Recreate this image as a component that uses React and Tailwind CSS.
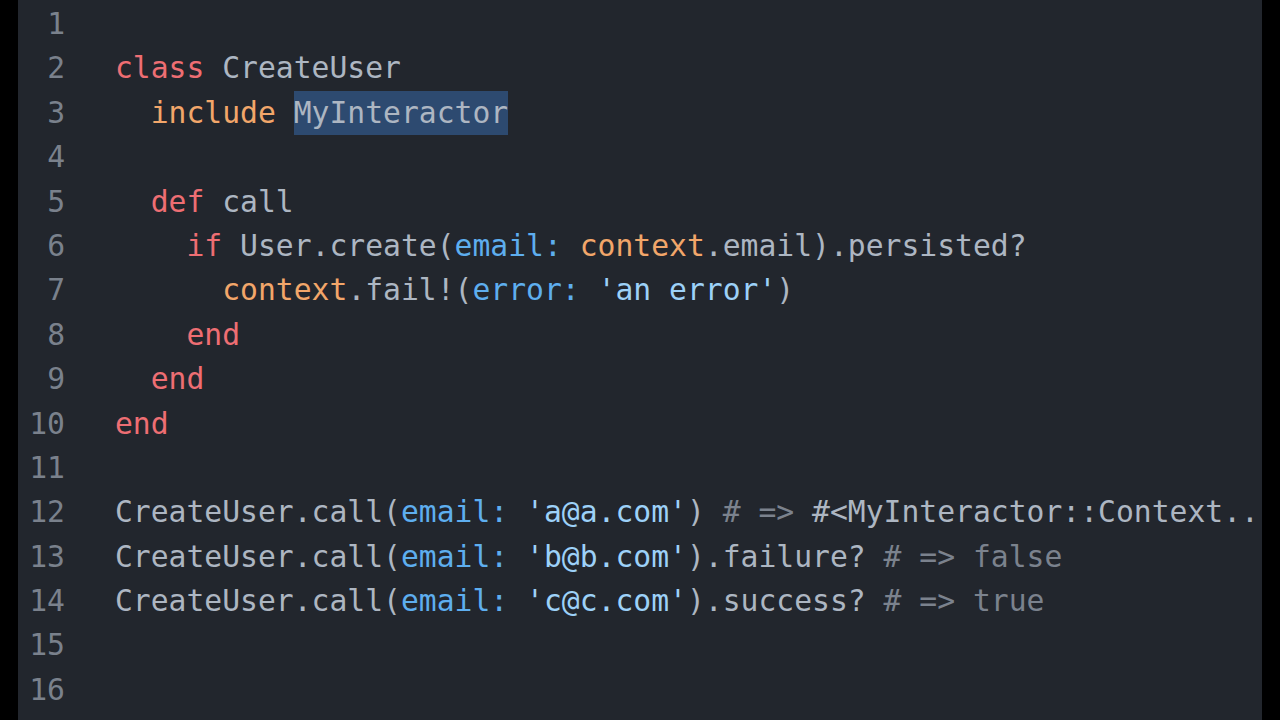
const K = 'text-[#ee6e73]';
const O = 'text-[#f2a66a]';
const P = 'text-[#adb6c2]';
const B = 'text-[#5eaeef]';
const S = 'text-[#9dd1f8]';
const C = 'text-[#7b828d]';

const lines = [
  [],
  [[K, 'class'], [P, ' CreateUser']],
  [[P, '  '], [O, 'include'], [P, ' '], ['sel', 'MyInteractor']],
  [],
  [[P, '  '], [K, 'def'], [P, ' call']],
  [[P, '    '], [K, 'if'], [P, ' User.create('], [B, 'email:'], [P, ' '], [O, 'context'], [P, '.email).persisted?']],
  [[P, '      '], [O, 'context'], [P, '.fail!('], [B, 'error:'], [P, ' '], [S, "'an error'"], [P, ')']],
  [[P, '    '], [K, 'end']],
  [[P, '  '], [K, 'end']],
  [[K, 'end']],
  [],
  [[P, 'CreateUser.call('], [B, 'email:'], [P, ' '], [S, "'a@a.com'"], [P, ') '], [C, '# => '], [P, '#<MyInteractor::Context..']],
  [[P, 'CreateUser.call('], [B, 'email:'], [P, ' '], [S, "'b@b.com'"], [P, ').failure? '], [C, '# => false']],
  [[P, 'CreateUser.call('], [B, 'email:'], [P, ' '], [S, "'c@c.com'"], [P, ').success? '], [C, '# => true']],
  [],
  [],
];

export default function App() {
  return (
    <div className="w-[1280px] h-[720px] bg-black flex overflow-hidden">
      <div className="w-[1244px] ml-[18px] bg-[#22262d] pt-[2px] font-['DejaVu_Sans_Mono',monospace] text-[29.7px] leading-[44.4px] whitespace-pre">
        {lines.map((toks, i) => (
          <div key={i} className="flex h-[44.4px]">
            <div className="w-[47px] text-right text-[#7a818c]">{i + 1}</div>
            <div className="pl-[50px]">
              {toks.map(([cls, t], j) =>
                cls === 'sel' ? (
                  <span key={j} className="bg-[#2d4a70] text-[#adb6c2] inline-block h-[44.4px]">{t}</span>
                ) : (
                  <span key={j} className={cls}>{t}</span>
                )
              )}
            </div>
          </div>
        ))}
      </div>
    </div>
  );
}
